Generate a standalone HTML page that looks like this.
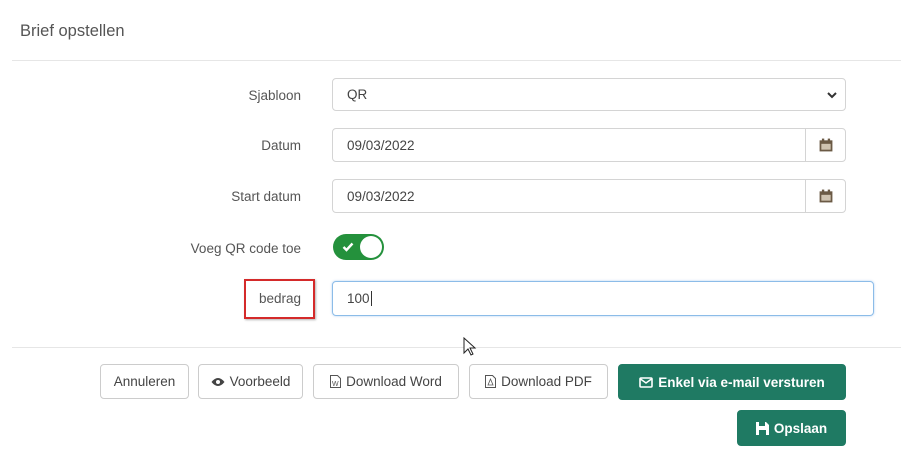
<!DOCTYPE html>
<html><head><style>
body{margin:0;width:901px;height:472px;background:#fff;font-family:"Liberation Sans",sans-serif;color:#555;position:relative;overflow:hidden}
.a{position:absolute}
.lbl{position:absolute;right:600px;font-size:13.5px;color:#555}
.inp{position:absolute;left:332px;border:1px solid #d4d4d4;border-radius:4px;height:32px;box-sizing:border-box;font-size:13.5px;color:#444;padding-left:14px;line-height:32px}
.btn{position:absolute;top:364px;height:35px;box-sizing:border-box;border:1px solid #ccc;border-radius:4px;font-size:13.5px;color:#444;display:flex;align-items:center;justify-content:center;gap:5px;background:#fff}
.g{background:#1f7a63;border-color:#1f7a63;color:#fff;font-weight:bold}
</style></head><body>
<div class="a" style="left:20px;top:22px;font-size:16.5px;color:#555">Brief opstellen</div>
<div class="a" style="left:12px;top:60px;width:889px;height:1px;background:#e6e6e6"></div>
<div class="a" style="left:12px;top:347px;width:889px;height:1px;background:#e6e6e6"></div>

<div class="lbl" style="top:88px">Sjabloon</div>
<div class="inp" style="top:78px;width:514px;height:33px">QR
<svg class="a" style="right:8px;top:12px" width="10" height="8" viewBox="0 0 10 8"><path d="M1 2l4 4 4-4" stroke="#333" stroke-width="2" fill="none"/></svg></div>

<div class="lbl" style="top:138px">Datum</div>
<div class="inp" style="top:128px;width:514px;height:34px;line-height:33px">09/03/2022
<div class="a" style="right:0;top:0;width:39px;height:32px;border-left:1px solid #d4d4d4"><svg class="a" style="left:13px;top:9px" width="14" height="14" viewBox="0 0 12 12"><rect x="0.5" y="2" width="11" height="9.5" fill="#6b5a45"/><rect x="2" y="5" width="8" height="5" fill="#cfc3b0"/><rect x="2.5" y="0.5" width="2" height="3" fill="#6b5a45"/><rect x="7.5" y="0.5" width="2" height="3" fill="#6b5a45"/></svg></div></div>

<div class="lbl" style="top:189px">Start datum</div>
<div class="inp" style="top:179px;width:514px;height:34px;line-height:33px">09/03/2022
<div class="a" style="right:0;top:0;width:39px;height:32px;border-left:1px solid #d4d4d4"><svg class="a" style="left:13px;top:9px" width="14" height="14" viewBox="0 0 12 12"><rect x="0.5" y="2" width="11" height="9.5" fill="#6b5a45"/><rect x="2" y="5" width="8" height="5" fill="#cfc3b0"/><rect x="2.5" y="0.5" width="2" height="3" fill="#6b5a45"/><rect x="7.5" y="0.5" width="2" height="3" fill="#6b5a45"/></svg></div></div>

<div class="lbl" style="top:241px">Voeg QR code toe</div>
<div class="a" style="left:333px;top:234px;width:51px;height:26px;border-radius:13px;background:#24913c">
<svg class="a" style="left:9px;top:8px" width="12" height="10" viewBox="0 0 12 10"><path d="M1.5 5l3 3 6-6.5" stroke="#fff" stroke-width="2.4" fill="none"/></svg>
<div class="a" style="left:27px;top:2px;width:22px;height:22px;border-radius:50%;background:#fff"></div></div>

<div class="a" style="left:244px;top:279px;width:67px;height:36px;border:2px solid #d42a2a;box-shadow:1px 1px 2px rgba(0,0,0,.3)"></div>
<div class="lbl" style="top:291px">bedrag</div>
<div class="inp" style="top:281px;width:542px;height:35px;line-height:33px;border-color:#8cbce8;box-shadow:0 0 2px rgba(100,160,230,.5)">100<span style="border-left:1px solid #333;margin-left:1px"></span></div>

<svg class="a" style="left:463px;top:337px" width="14" height="20" viewBox="0 0 14 20"><path d="M1 1v15l4-4 3 6 2-1-3-6h5z" fill="#fff" stroke="#222" stroke-width="1"/></svg>

<div class="btn" style="left:100px;width:89px">Annuleren</div>
<div class="btn" style="left:198px;width:105px"><svg width="14" height="10" viewBox="0 0 14 10"><path d="M0.5 5Q7-3 13.5 5Q7 13 0.5 5z" fill="#444"/><circle cx="7" cy="5" r="2" fill="#fff"/></svg>Voorbeeld</div>
<div class="btn" style="left:313px;width:146px"><svg width="11" height="13" viewBox="0 0 11 13"><path d="M.5.5h7l3 3v9h-10z" fill="none" stroke="#555"/><text x="2" y="11" font-size="7" fill="#555" font-family="Liberation Sans">W</text></svg>Download Word</div>
<div class="btn" style="left:469px;width:139px"><svg width="11" height="13" viewBox="0 0 11 13"><path d="M.5.5h7l3 3v9h-10z" fill="none" stroke="#555"/><path d="M3 10l2.5-6 2.5 6z" fill="none" stroke="#555" stroke-width=".8"/></svg>Download PDF</div>
<div class="btn g" style="left:618px;width:228px;height:36px"><svg width="14" height="11" viewBox="0 0 14 11"><rect x="1" y="1" width="12" height="9" rx="1" fill="none" stroke="#fff" stroke-width="1.6"/><path d="M1.5 2l5.5 4 5.5-4" fill="none" stroke="#fff" stroke-width="1.5"/></svg>Enkel via e-mail versturen</div>
<div class="btn g" style="left:737px;top:410px;width:109px;height:36px"><svg width="13" height="13" viewBox="0 0 13 13"><path d="M0 0h10l3 3v10h-13z" fill="#fff"/><rect x="3" y="0" width="6" height="4" fill="#1f7a63"/><rect x="3" y="8" width="7" height="5" fill="#1f7a63"/></svg>Opslaan</div>
</body></html>
